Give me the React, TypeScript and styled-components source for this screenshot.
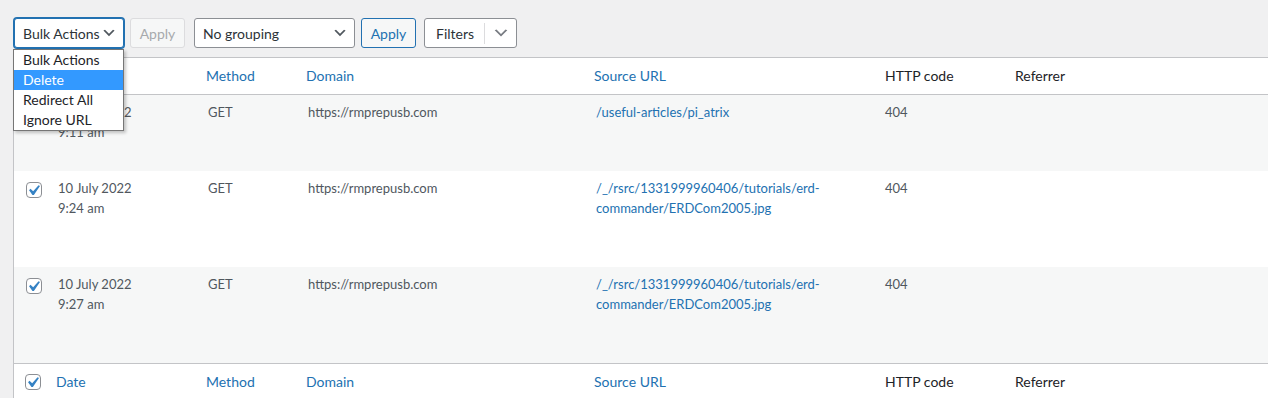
import React from "react";
import styled, { createGlobalStyle } from "styled-components";

const GlobalStyle = createGlobalStyle`
  html, body { margin: 0; padding: 0; }
  body {
    background: #f0f0f1;
    font-family: Lato, "Liberation Sans", sans-serif;
    color: #3c434a;
    overflow: hidden;
  }
`;

const Page = styled.div`
  width: 1268px;
  height: 398px;
  overflow: hidden;
  padding-top: 18px;
  box-sizing: border-box;
`;

const Toolbar = styled.div`
  display: flex;
  align-items: center;
  height: 30px;
  padding-left: 14px;
`;

const SelectWrap = styled.div`
  position: relative;
`;

const SelectBox = styled.div<{ $w: number; $focus?: boolean; $ml?: number }>`
  display: flex;
  align-items: center;
  justify-content: space-between;
  box-sizing: border-box;
  width: ${(p) => p.$w}px;
  height: 30px;
  margin-left: ${(p) => p.$ml ?? 0}px;
  padding: 0 6px 0 8px;
  background: #fff;
  border: 1px solid ${(p) => (p.$focus ? "#2271b1" : "#8c8f94")};
  box-shadow: ${(p) => (p.$focus ? "0 0 0 1px #2271b1" : "none")};
  border-radius: 3px;
  font-size: 14px;
  color: #2c3338;
  white-space: nowrap;
`;

const Button = styled.div<{ $disabled?: boolean; $ml: number }>`
  display: flex;
  align-items: center;
  justify-content: center;
  box-sizing: border-box;
  width: 55px;
  height: 30px;
  margin-left: ${(p) => p.$ml}px;
  border-radius: 3px;
  font-size: 14px;
  background: #f6f7f7;
  border: 1px solid ${(p) => (p.$disabled ? "#dcdcde" : "#2271b1")};
  color: ${(p) => (p.$disabled ? "#a7aaad" : "#2271b1")};
`;

const SplitButton = styled.div`
  display: flex;
  align-items: center;
  box-sizing: border-box;
  height: 30px;
  margin-left: 8px;
  width: 93px;
  background: #fff;
  border: 1px solid #8c8f94;
  border-radius: 3px;
  font-size: 14px;
  color: #2c3338;
`;

const SplitLabel = styled.span`
  padding-left: 11px;
  width: 48px;
`;

const SplitDivider = styled.span`
  width: 1px;
  height: 21px;
  background: #dcdcde;
`;

const SplitArrow = styled.span`
  flex: 1;
  display: flex;
  justify-content: center;
  align-items: center;
`;

const Menu = styled.div`
  position: absolute;
  left: -1px;
  top: 31px;
  width: 111px;
  box-sizing: border-box;
  background: #fff;
  border: 1px solid #767676;
  box-shadow: 2px 2px 3px rgba(0, 0, 0, 0.22);
  z-index: 10;
`;

const MenuItem = styled.div<{ $active?: boolean }>`
  height: 20px;
  line-height: 20px;
  padding-left: 9px;
  font-size: 14px;
  color: ${(p) => (p.$active ? "#fff" : "#1d2327")};
  background: ${(p) => (p.$active ? "#3399ff" : "transparent")};
  white-space: nowrap;
`;

const Table = styled.div`
  margin-top: 9px;
  margin-left: 13px;
  width: 1300px;
  background: #fff;
  border-top: 1px solid #c3c4c7;
  border-left: 1px solid #c3c4c7;
`;

const COLS = "34px 150px 100px 288px 289px 130px 1fr";

const HeadRow = styled.div<{ $footer?: boolean }>`
  display: grid;
  grid-template-columns: ${COLS};
  height: 36px;
  align-items: center;
  background: #fff;
  border-top: ${(p) => (p.$footer ? "1px solid #c3c4c7" : "none")};
  border-bottom: ${(p) => (p.$footer ? "none" : "1px solid #c3c4c7")};
`;

const HeadCell = styled.div<{ $sortable?: boolean }>`
  padding-left: ${(p) => (p.$sortable ? 8 : 10)}px;
  padding-bottom: 2px;
  font-size: 14px;
  color: ${(p) => (p.$sortable ? "#2271b1" : "#1d2327")};
  white-space: nowrap;
`;

const HeadCheckCell = styled.div`
  display: flex;
  align-items: center;
  padding-left: 11px;
`;

const CheckCell = styled.div`
  align-self: start;
  padding: 11px 0 0 12px;
`;

const BodyRow = styled.div<{ $alt?: boolean }>`
  display: grid;
  grid-template-columns: ${COLS};
  background: ${(p) => (p.$alt ? "#f6f7f7" : "#fff")};
`;

const Cell = styled.div`
  padding: 7px 10px 9px;
  font-size: 13px;
  line-height: 20px;
  color: #50575e;
`;

const SourceLink = styled.a`
  color: #2271b1;
  text-decoration: none;
  display: block;
`;

const RowActions = styled.div`
  height: 40px;
  visibility: hidden;
`;

const Box = styled.span`
  position: relative;
  display: inline-block;
  box-sizing: border-box;
  width: 16px;
  height: 16px;
  border: 1px solid #8c8f94;
  border-radius: 4px;
  background: #fff;
  vertical-align: top;
`;

const CheckMark = styled.svg`
  position: absolute;
  top: -3px;
  left: -4px;
  width: 21px;
  height: 21px;
`;

const Chevron = ({ color = "#50575e", size = 16 }: { color?: string; size?: number }) => (
  <svg width={size} height={size} viewBox="0 0 20 20" aria-hidden="true">
    <path d="M5 6l5 5 5-5 2 1-7 7-7-7 2-1z" fill={color} />
  </svg>
);

const Checkbox = () => (
  <Box>
    <CheckMark viewBox="0 0 20 20" aria-hidden="true">
      <path d="M14.83 4.89l1.34.94-5.81 8.38H9.02L5.78 9.67l1.34-1.25 2.57 2.4z" fill="#3582c4" />
    </CheckMark>
  </Box>
);

type Row = { date: string; time: string; url: string };

const rows: Row[] = [
  { date: "10 July 2022", time: "9:11 am", url: "/useful-articles/pi_atrix" },
  {
    date: "10 July 2022",
    time: "9:24 am",
    url: "/_/rsrc/1331999960406/tutorials/erd-commander/ERDCom2005.jpg",
  },
  {
    date: "10 July 2022",
    time: "9:27 am",
    url: "/_/rsrc/1331999960406/tutorials/erd-commander/ERDCom2005.jpg",
  },
];

const Header = ({ footer }: { footer?: boolean }) => (
  <HeadRow $footer={footer}>
    <HeadCheckCell>
      <Checkbox />
    </HeadCheckCell>
    <HeadCell $sortable>Date</HeadCell>
    <HeadCell $sortable>Method</HeadCell>
    <HeadCell $sortable>Domain</HeadCell>
    <HeadCell $sortable>Source URL</HeadCell>
    <HeadCell>HTTP code</HeadCell>
    <HeadCell>Referrer</HeadCell>
  </HeadRow>
);

export default function App() {
  return (
    <Page>
      <GlobalStyle />
      <Toolbar>
        <SelectWrap>
          <SelectBox $w={110} $focus>
            <span>Bulk Actions</span>
            <Chevron />
          </SelectBox>
          <Menu>
            <MenuItem>Bulk Actions</MenuItem>
            <MenuItem $active>Delete</MenuItem>
            <MenuItem>Redirect All</MenuItem>
            <MenuItem>Ignore URL</MenuItem>
          </Menu>
        </SelectWrap>
        <Button $disabled $ml={6}>
          Apply
        </Button>
        <SelectBox $w={161} $ml={9}>
          <span>No grouping</span>
          <Chevron />
        </SelectBox>
        <Button $ml={6}>Apply</Button>
        <SplitButton>
          <SplitLabel>Filters</SplitLabel>
          <SplitDivider />
          <SplitArrow>
            <Chevron color="#787c82" size={18} />
          </SplitArrow>
        </SplitButton>
      </Toolbar>

      <Table>
        <Header />
        {rows.map((r, i) => (
          <BodyRow key={i} $alt={i % 2 === 0}>
            <CheckCell>
              <Checkbox />
            </CheckCell>
            <Cell>
              {r.date}
              <br />
              {r.time}
            </Cell>
            <Cell>GET</Cell>
            <Cell>https://rmprepusb.com</Cell>
            <Cell>
              <SourceLink href="#">{r.url}</SourceLink>
              <RowActions>Edit</RowActions>
            </Cell>
            <Cell>404</Cell>
            <Cell />
          </BodyRow>
        ))}
        <Header footer />
      </Table>
    </Page>
  );
}
